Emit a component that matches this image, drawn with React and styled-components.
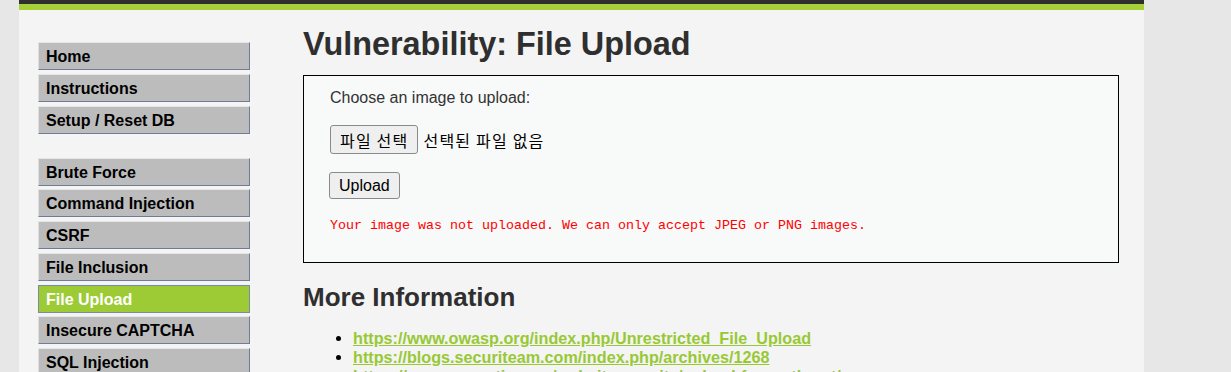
import React from "react";
import styled, { createGlobalStyle } from "styled-components";

const Global = createGlobalStyle`
  html, body { margin: 0; padding: 0; }
  body {
    background: #e7e7e7;
    font-family: "Liberation Sans", Arial, sans-serif;
    color: #2f2f2f;
    overflow: hidden;
  }
`;

const Container = styled.div`
  margin-left: 19px;
  width: 1125px;
  min-height: 372px;
  background: #f4f4f4;
  border-top: 4px solid #2f2f2f;
`;

const GreenBar = styled.div`
  height: 6px;
  background: #a6cf38;
`;

const Body = styled.div`
  display: flex;
`;

const Sidebar = styled.nav`
  width: 212px;
  padding: 32px 0 0 19px;
  display: flex;
  flex-direction: column;
  gap: 24px;
  flex-shrink: 0;
`;

const MenuGroup = styled.ul`
  list-style: none;
  margin: 0;
  padding: 0;
  display: flex;
  flex-direction: column;
  gap: 3.75px;
`;

const MenuItem = styled.li`
  height: 26px;
  line-height: 27px;
  padding-left: 7px;
  font-size: 16px;
  font-weight: bold;
  color: ${(p) => (p.$active ? "#ffffff" : "#000000")};
  background: ${(p) => (p.$active ? "#9ccb35" : "#bcbcbc")};
  border: 1px solid;
  border-color: ${(p) =>
    p.$active ? "#7a8aa6" : "#e6e6e6 #6f7e98 #6f7e98 #dedede"};
`;

const Main = styled.main`
  margin-left: 53px;
  width: 816px;
  padding-top: 16px;
`;

const Title = styled.h1`
  margin: 0 0 12px;
  font-size: 32.4px;
  font-weight: bold;
  color: #2f2f2f;
`;

const CodeArea = styled.div`
  border: 1px solid #000;
  background: #f8f9f9;
  padding: 13px 0 0 26px;
  box-sizing: border-box;
  height: 188px;
`;

const Label = styled.p`
  margin: 0;
  font-size: 16px;
  color: #333;
`;

const FileRow = styled.div`
  margin-top: 18px;
  display: flex;
  align-items: center;
  gap: 5px;
  font-family: "Noto Sans CJK KR", "Liberation Sans", sans-serif;
  font-size: 16px;
  letter-spacing: 1.2px;
  color: #000;
`;

const Button = styled.button`
  font-family: "Noto Sans CJK KR", "Liberation Sans", sans-serif;
  font-size: 16px;
  letter-spacing: inherit;
  height: ${(p) => p.$h}px;
  padding: 0 9px;
  margin: 0;
  background: #efefef;
  border: 1px solid #8a8a8a;
  border-radius: 3px;
  color: #000;
  line-height: 1;
  display: flex;
  align-items: center;
`;

const UploadWrap = styled.div`
  margin-top: 18px;
  margin-left: -1px;
  & > button {
    font-family: "Liberation Sans", Arial, sans-serif;
  }
`;

const Error = styled.pre`
  margin: 19px 0 0;
  font-family: "Liberation Mono", monospace;
  font-size: 13.33px;
  color: #ff0000;
`;

const SubTitle = styled.h2`
  margin: 19px 0 0;
  font-size: 26px;
  font-weight: bold;
  color: #2f2f2f;
`;

const Links = styled.ul`
  margin: 16px 0 0;
  padding-left: 50px;
`;

const LinkItem = styled.li`
  font-size: 16.2px;
  color: #000;
`;

const Link = styled.a`
  color: #98c934;
  font-weight: bold;
  text-decoration: underline;
`;

const group1 = ["Home", "Instructions", "Setup / Reset DB"];
const group2 = [
  "Brute Force",
  "Command Injection",
  "CSRF",
  "File Inclusion",
  "File Upload",
  "Insecure CAPTCHA",
  "SQL Injection",
];

const links = [
  "https://www.owasp.org/index.php/Unrestricted_File_Upload",
  "https://blogs.securiteam.com/index.php/archives/1268",
  "https://www.acunetix.com/websitesecurity/upload-forms-threat/",
];

export default function App() {
  return (
    <>
      <Global />
      <Container>
        <GreenBar />
        <Body>
          <Sidebar>
            <MenuGroup>
              {group1.map((t) => (
                <MenuItem key={t}>{t}</MenuItem>
              ))}
            </MenuGroup>
            <MenuGroup>
              {group2.map((t) => (
                <MenuItem key={t} $active={t === "File Upload"}>
                  {t}
                </MenuItem>
              ))}
            </MenuGroup>
          </Sidebar>
          <Main>
            <Title>Vulnerability: File Upload</Title>
            <CodeArea>
              <Label>Choose an image to upload:</Label>
              <FileRow>
                <Button $h={29}>파일 선택</Button>
                <span>선택된 파일 없음</span>
              </FileRow>
              <UploadWrap>
                <Button $h={27}>Upload</Button>
              </UploadWrap>
              <Error>
                Your image was not uploaded. We can only accept JPEG or PNG images.
              </Error>
            </CodeArea>
            <SubTitle>More Information</SubTitle>
            <Links>
              {links.map((l) => (
                <LinkItem key={l}>
                  <Link href="#">{l}</Link>
                </LinkItem>
              ))}
            </Links>
          </Main>
        </Body>
      </Container>
    </>
  );
}
